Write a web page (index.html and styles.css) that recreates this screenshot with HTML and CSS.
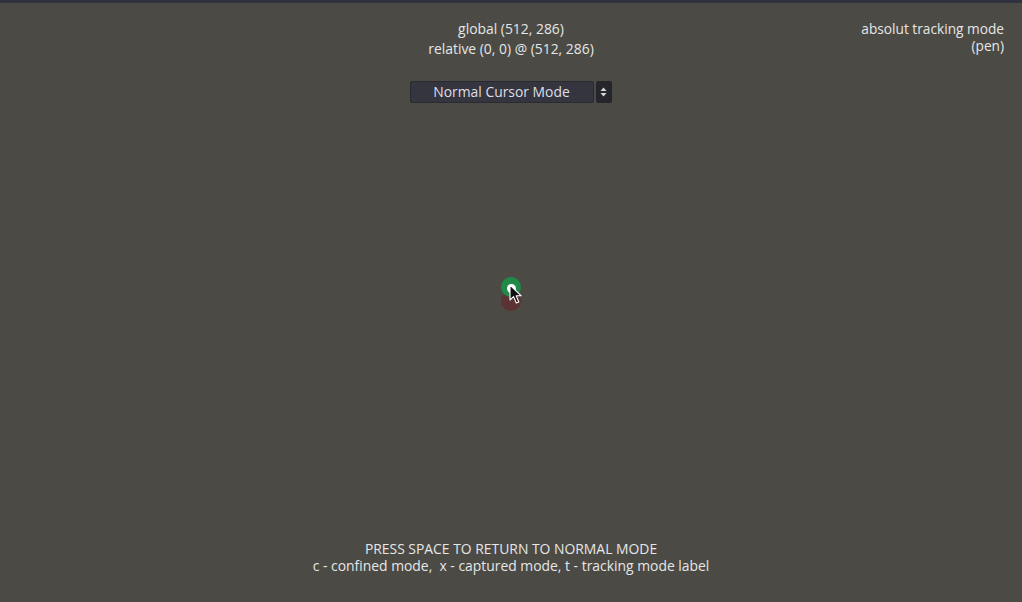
FILE: index.html
```html
<!DOCTYPE html>
<html>
<head>
<meta charset="utf-8">
<link rel="stylesheet" href="styles.css">
</head>
<body>
<div class="topbar"></div>
<div class="page">
  <header class="header">
    <div class="spacer"></div>
    <div class="coords">
      <div>global (512, 286)</div>
      <div>relative (0, 0) @ (512, 286)</div>
    </div>
    <div class="mode">
      <div>absolut tracking mode</div>
      <div>(pen)</div>
    </div>
  </header>
  <div class="selectrow">
    <div class="select">
      <div class="select-label">Normal Cursor Mode</div>
      <div class="select-arrow">
        <svg width="7" height="10" viewBox="0 0 7 10"><path d="M3.5 0.5 L6.5 4 H0.5 Z M3.5 9.5 L6.5 6 H0.5 Z" fill="#d8d8dc"/></svg>
      </div>
    </div>
  </div>
  <main class="canvas">
    <div class="dot dot-red"></div>
    <div class="dot dot-green"><div class="dot-inner"></div></div>
    <svg class="cursor" width="14" height="21" viewBox="0 0 14 21"><path d="M1 1 L1 16 L4.6 12.6 L7.3 19 L9.8 18 L7.2 11.8 L12.2 11.8 Z" fill="#111" stroke="#fff" stroke-width="1.1" stroke-linejoin="round"/></svg>
  </main>
  <footer class="footer">
    <div>PRESS SPACE TO RETURN TO NORMAL MODE</div>
    <div>c - confined mode,&nbsp; x - captured mode, t - tracking mode label</div>
  </footer>
</div>
</body>
</html>
```
FILE: styles.css
```css
html, body {
  margin: 0;
  padding: 0;
  height: 100%;
}
body {
  background: #4b4a45;
  color: #e6e6e6;
  font-family: "Open Sans", "DejaVu Sans", sans-serif;
  font-size: 13.9px;
  display: flex;
  flex-direction: column;
  overflow: hidden;
}
.topbar {
  height: 3px;
  background: #31323f;
  flex: none;
}
.page {
  flex: 1;
  display: flex;
  flex-direction: column;
}
.header {
  display: grid;
  grid-template-columns: 1fr auto 1fr;
  padding-top: 16px;
}
.coords {
  text-align: center;
  line-height: 20px;
}
.mode {
  text-align: right;
  line-height: 17px;
  padding-right: 18px;
  padding-top: 1px;
  font-size: 13.7px;
}
.selectrow {
  display: flex;
  justify-content: center;
  padding-top: 22px;
}
.select {
  display: flex;
  height: 22px;
  width: 202px;
  margin-left: -1px;
}
.select-label {
  width: 184px;
  box-sizing: border-box;
  background: #35353f;
  border: 1px solid #2a2a31;
  border-radius: 2px;
  text-align: center;
  line-height: 20px;
  color: #dedee4;
}
.select-arrow {
  width: 16px;
  margin-left: 2px;
  background: #25252c;
  border-radius: 2px;
  display: flex;
  align-items: center;
  justify-content: center;
}
.canvas {
  flex: 1;
  position: relative;
}
.dot {
  position: absolute;
  width: 20px;
  height: 20px;
  border-radius: 50%;
}
.dot-red {
  left: 501px;
  top: 188px;
  background: #5c3334;
}
.dot-green {
  left: 501px;
  top: 174px;
  background: #208a49;
  display: flex;
  align-items: center;
  justify-content: center;
}
.dot-inner {
  width: 9px;
  height: 9px;
  border-radius: 50%;
  background: #ffffff;
  margin-top: 2px;
}
.cursor {
  position: absolute;
  left: 509px;
  top: 181px;
}
.footer {
  text-align: center;
  line-height: 17px;
  padding-bottom: 28px;
}
```
